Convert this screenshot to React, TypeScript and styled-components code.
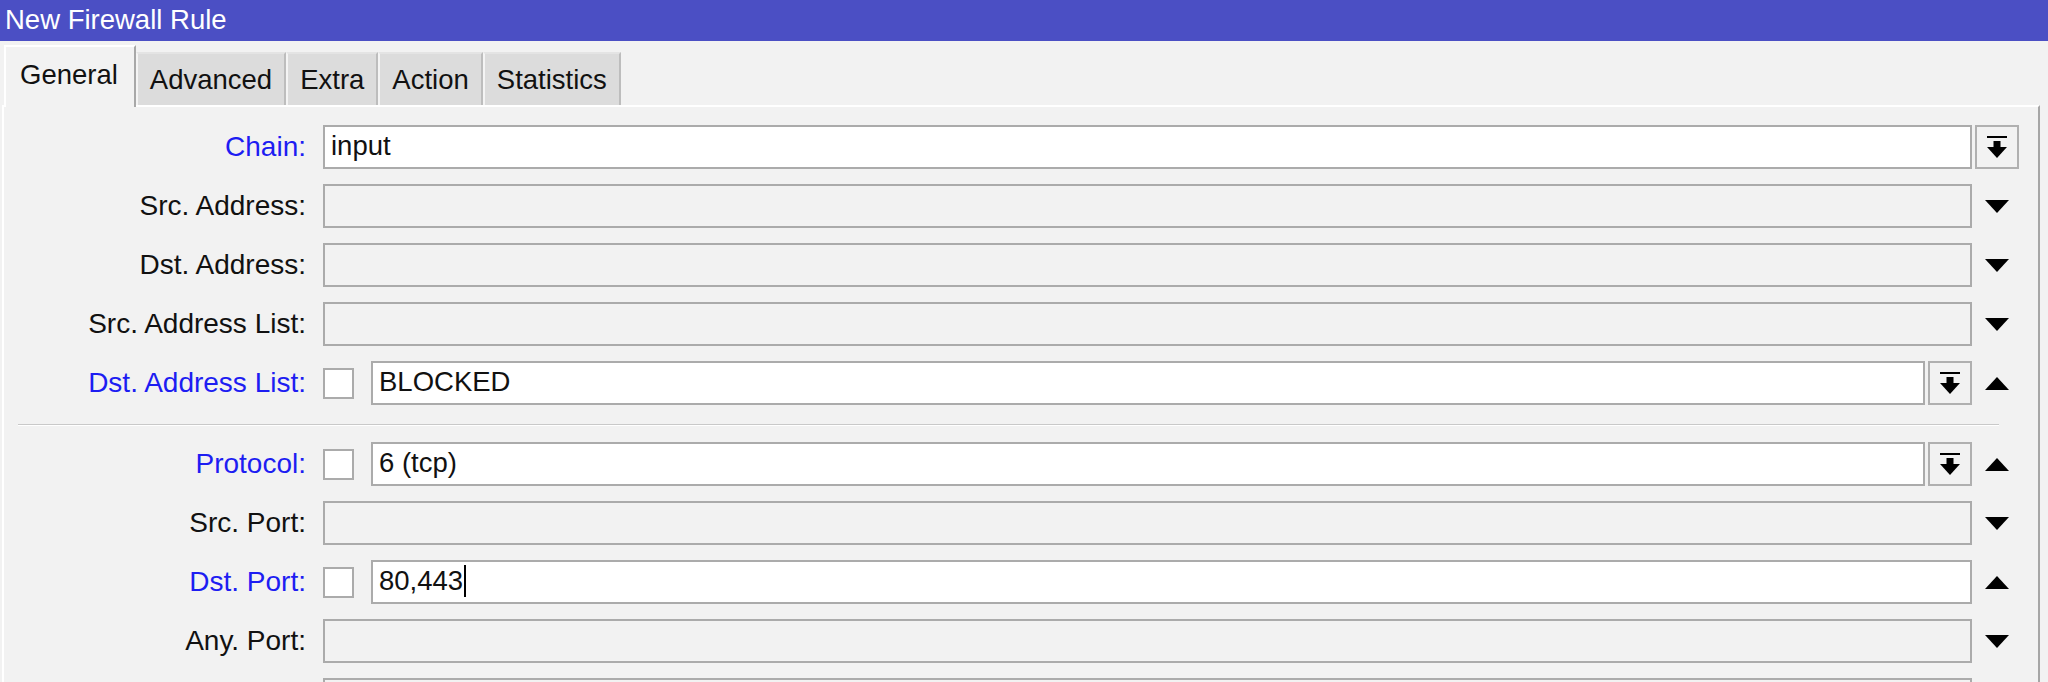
import React from "react";
import styled, { createGlobalStyle } from "styled-components";

const GlobalStyle = createGlobalStyle`
  html, body {
    margin: 0;
    padding: 0;
    background: #f2f2f2;
    overflow: hidden;
    height: 682px;
  }
  body {
    font-family: "Liberation Sans", Arial, sans-serif;
    font-size: 27.5px;
    color: #111;
  }
  * { box-sizing: border-box; }
`;

const Window = styled.div`
  display: flex;
  flex-direction: column;
  width: 2048px;
  height: 682px;
  overflow: hidden;
  background: #f2f2f2;
`;

const TitleBar = styled.div`
  height: 41px;
  flex-shrink: 0;
  background: #4b4fc4;
  color: #ffffff;
  padding-left: 5px;
  line-height: 40px;
  white-space: nowrap;
`;

const TabStrip = styled.div`
  display: flex;
  align-items: flex-end;
  height: 64px;
  flex-shrink: 0;
  padding-left: 4px;
  position: relative;
  z-index: 1;
`;

const Tab = styled.div<{ $active?: boolean }>`
  display: flex;
  align-items: center;
  height: ${(p) => (p.$active ? "62px" : "53px")};
  margin-bottom: ${(p) => (p.$active ? "-2px" : "0")};
  padding: ${(p) => (p.$active ? "0 16px 4px 14px" : "0 12px 0 12px")};
  background: ${(p) => (p.$active ? "#f2f2f2" : "#dcdcdc")};
  border-top: 2px solid ${(p) => (p.$active ? "#ffffff" : "#e4e4e4")};
  border-left: 2px solid ${(p) => (p.$active ? "#ffffff" : "#f4f4f4")};
  border-right: 2px solid ${(p) => (p.$active ? "#a8a8a8" : "#bdbdbd")};
  white-space: nowrap;
  color: #111;
`;

const Panel = styled.div`
  flex: 1;
  margin: 0 8px 0 2px;
  border-top: 2px solid #ffffff;
  border-left: 2px solid #ffffff;
  border-right: 2px solid #a6a6a6;
  padding: 18px 19px 0 0;
  display: flex;
  flex-direction: column;
  gap: 15px;
  overflow: hidden;
`;

const FormRow = styled.div`
  display: grid;
  grid-template-columns: 316px 1fr 44px;
  column-gap: 3px;
  height: 44px;
  align-items: center;
  flex-shrink: 0;
`;

const Label = styled.div<{ $active?: boolean }>`
  text-align: right;
  padding-right: 14px;
  font-size: 28px;
  white-space: nowrap;
  color: ${(p) => (p.$active ? "#1d1df2" : "#111111")};
`;

const FieldGroup = styled.div`
  display: flex;
  align-items: center;
  gap: 3px;
  height: 44px;
  min-width: 0;
`;

const Checkbox = styled.div`
  width: 31px;
  height: 31px;
  margin-right: 14px;
  flex-shrink: 0;
  background: #ffffff;
  border: 2px solid #ababab;
`;

const TextBox = styled.div<{ $editable?: boolean }>`
  flex: 1;
  height: 44px;
  min-width: 0;
  display: flex;
  align-items: center;
  padding: 0 6px 2px 6px;
  background: ${(p) => (p.$editable ? "#ffffff" : "#f2f2f2")};
  border: 2px solid #ababab;
  color: #111;
  white-space: nowrap;
  overflow: hidden;
`;

const Caret = styled.span`
  display: inline-block;
  width: 2px;
  height: 32px;
  margin-left: 1px;
  background: #000;
`;

const DropButton = styled.div`
  width: 44px;
  height: 44px;
  flex-shrink: 0;
  display: flex;
  align-items: center;
  justify-content: center;
  background: #f2f2f2;
  border: 2px solid #b0b0b0;
`;

const ArrowCell = styled.div`
  display: flex;
  align-items: center;
  justify-content: center;
  height: 44px;
`;

const Separator = styled.div`
  height: 2px;
  margin: 4px 20px 1px 14px;
  background: #c9c9c9;
  border-bottom: 1px solid #ffffff;
  flex-shrink: 0;
`;

const DropIcon = () => (
  <svg width="20" height="23" viewBox="0 0 20 23">
    <rect x="0" y="0" width="20" height="2" fill="#000" />
    <rect x="6.5" y="5" width="7" height="6" fill="#000" />
    <polygon points="0,11 20,11 10,22" fill="#000" />
  </svg>
);

const Triangle = ({ up }: { up?: boolean }) => (
  <svg width="24" height="13" viewBox="0 0 24 13">
    {up ? (
      <polygon points="0,13 24,13 12,0" fill="#000" />
    ) : (
      <polygon points="0,0 24,0 12,13" fill="#000" />
    )}
  </svg>
);

type RowDef = {
  id: string;
  label: string;
  active?: boolean;
  value?: string;
  checkbox?: boolean;
  button?: "field" | "side";
  arrow?: "up" | "down";
  caret?: boolean;
};

const topRows: RowDef[] = [
  { id: "chain", label: "Chain:", active: true, value: "input", button: "side" },
  { id: "src", label: "Src. Address:", arrow: "down" },
  { id: "dst", label: "Dst. Address:", arrow: "down" },
  { id: "srcl", label: "Src. Address List:", arrow: "down" },
  { id: "dstl", label: "Dst. Address List:", active: true, checkbox: true, value: "BLOCKED", button: "field", arrow: "up" },
];

const bottomRows: RowDef[] = [
  { id: "proto", label: "Protocol:", active: true, checkbox: true, value: "6 (tcp)", button: "field", arrow: "up" },
  { id: "sport", label: "Src. Port:", arrow: "down" },
  { id: "dport", label: "Dst. Port:", active: true, checkbox: true, value: "80,443", caret: true, arrow: "up" },
  { id: "aport", label: "Any. Port:", arrow: "down" },
  { id: "next", label: "", arrow: "down" },
];

const Row = ({ row }: { row: RowDef }) => {
  const editable = row.value !== undefined;
  return (
    <FormRow>
      <Label $active={row.active}>{row.label}</Label>
      <FieldGroup>
        {row.checkbox && <Checkbox />}
        <TextBox $editable={editable}>
          {row.value}
          {row.caret && <Caret />}
        </TextBox>
        {row.button === "field" && (
          <DropButton>
            <DropIcon />
          </DropButton>
        )}
      </FieldGroup>
      <ArrowCell>
        {row.button === "side" ? (
          <DropButton>
            <DropIcon />
          </DropButton>
        ) : row.arrow ? (
          <Triangle up={row.arrow === "up"} />
        ) : null}
      </ArrowCell>
    </FormRow>
  );
};

const tabs = ["General", "Advanced", "Extra", "Action", "Statistics"];

export default function App() {
  return (
    <>
      <GlobalStyle />
      <Window>
        <TitleBar>New Firewall Rule</TitleBar>
        <TabStrip>
          {tabs.map((t, i) => (
            <Tab key={t} $active={i === 0}>
              {t}
            </Tab>
          ))}
        </TabStrip>
        <Panel>
          {topRows.map((r) => (
            <Row key={r.id} row={r} />
          ))}
          <Separator />
          {bottomRows.map((r) => (
            <Row key={r.id} row={r} />
          ))}
        </Panel>
      </Window>
    </>
  );
}
